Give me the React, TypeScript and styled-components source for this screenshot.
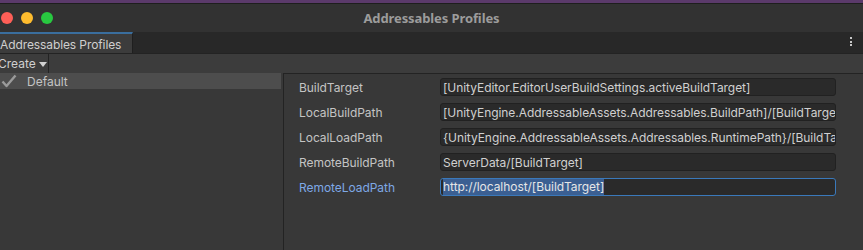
import React from "react";
import styled, { createGlobalStyle } from "styled-components";

const Global = createGlobalStyle`
  html, body { margin: 0; padding: 0; background: #383838; }
  body { font-family: Inter, "Noto Sans", sans-serif; overflow: hidden; }
`;

const Screen = styled.div`
  width: 863px;
  height: 250px;
  display: flex;
  flex-direction: column;
  background: #383838;
  overflow: hidden;
`;

const Desktop = styled.div`
  height: 3px;
  background: #5b3a6b;
  border-bottom: 1px solid #1e1e1e;
  flex: none;
`;

const TitleBar = styled.div`
  height: 28px;
  flex: none;
  position: relative;
  display: flex;
  align-items: center;
  justify-content: center;
  background: #323232;
`;

const Lights = styled.div`
  position: absolute;
  left: 1px;
  top: 0;
  bottom: 0;
  display: flex;
  align-items: center;
  gap: 8px;
`;

const Light = styled.span<{ $c: string }>`
  width: 12px;
  height: 12px;
  border-radius: 50%;
  background: ${(p) => p.$c};
`;

const Title = styled.div`
  font-family: "Noto Sans", Inter, sans-serif;
  font-weight: 700;
  font-size: 13px;
  color: #9c9c9c;
  letter-spacing: -0.1px;
`;

const TabBar = styled.div`
  height: 21px;
  flex: none;
  display: flex;
  align-items: stretch;
  background: #282828;
  position: relative;
`;

const Tab = styled.div`
  width: 133px;
  background: #3c3c3c;
  border-top: 2px solid #3a6e9e;
  border-right: 1px solid #1f1f1f;
  box-sizing: border-box;
  display: flex;
  align-items: center;
  font-size: 12px;
  color: #cfcfcf;
  padding-top: 1px;
  white-space: nowrap;
  letter-spacing: -0.1px;
`;

const Kebab = styled.div`
  position: absolute;
  right: 11px;
  top: 5px;
  display: flex;
  flex-direction: column;
  gap: 1.5px;
  span {
    width: 2px;
    height: 2px;
    background: #c8c8c8;
  }
`;

const Toolbar = styled.div`
  height: 20px;
  flex: none;
  display: flex;
  align-items: stretch;
  background: #3c3c3c;
  border-top: 1px solid #232323;
  box-sizing: border-box;
`;

const ToolButton = styled.div`
  width: 50px;
  border-right: 1px solid #232323;
  display: flex;
  align-items: center;
  gap: 3px;
  margin-left: -2px;
  font-size: 12px;
  color: #cfcfcf;
  svg { margin-top: 1px; }
`;

const Body = styled.div`
  flex: 1;
  display: flex;
  align-items: stretch;
`;

const Sidebar = styled.div`
  width: 283px;
  flex: none;
  display: flex;
  flex-direction: column;
`;

const ProfileRow = styled.div<{ $selected?: boolean }>`
  width: 281px;
  height: 16px;
  display: flex;
  align-items: center;
  background: ${(p) => (p.$selected ? "#4d4d4d" : "transparent")};
  font-size: 12px;
  color: #c4c4c4;
  gap: 10px;
  svg { margin-left: 1px; }
`;

const Panel = styled.div`
  flex: 1;
  border-left: 1px solid #232323;
  border-top: 1px solid #232323;
  padding: 4px 27px 0 15px;
  display: flex;
  flex-direction: column;
  gap: 7px;
`;

const FieldRow = styled.div`
  display: grid;
  grid-template-columns: 141px 1fr;
  align-items: center;
  height: 18px;
`;

const Label = styled.div<{ $active?: boolean }>`
  font-size: 12px;
  color: ${(p) => (p.$active ? "#7ea8e6" : "#c4c4c4")};
  letter-spacing: -0.05px;
`;

const Field = styled.div<{ $active?: boolean }>`
  height: 18px;
  box-sizing: border-box;
  border-radius: 3px;
  background: #2a2a2a;
  border: 1px solid ${(p) => (p.$active ? "#3a79bb" : "#212121")};
  display: flex;
  align-items: center;
  padding: 0 2px;
  font-size: 12px;
  color: #d0d0d0;
  white-space: nowrap;
  overflow: hidden;
  letter-spacing: -0.05px;
`;

const Selection = styled.span`
  background: #3b5f92;
  color: #e6e6e6;
  line-height: 16px;
`;

const fields = [
  { label: "BuildTarget", value: "[UnityEditor.EditorUserBuildSettings.activeBuildTarget]" },
  { label: "LocalBuildPath", value: "[UnityEngine.AddressableAssets.Addressables.BuildPath]/[BuildTarget]" },
  { label: "LocalLoadPath", value: "{UnityEngine.AddressableAssets.Addressables.RuntimePath}/[BuildTarget]" },
  { label: "RemoteBuildPath", value: "ServerData/[BuildTarget]" },
];

export default function App() {
  return (
    <Screen>
      <Global />
      <Desktop />
      <TitleBar>
        <Lights>
          <Light $c="#fe5f57" />
          <Light $c="#febc2e" />
          <Light $c="#28c840" />
        </Lights>
        <Title>Addressables Profiles</Title>
      </TitleBar>
      <TabBar>
        <Tab>Addressables Profiles</Tab>
        <Kebab>
          <span />
          <span />
          <span />
        </Kebab>
      </TabBar>
      <Toolbar>
        <ToolButton>
          Create
          <svg width="8" height="5" viewBox="0 0 8 5">
            <path d="M0 0h8L4 5z" fill="#d2d2d2" />
          </svg>
        </ToolButton>
      </Toolbar>
      <Body>
        <Sidebar>
          <ProfileRow $selected>
            <svg width="16" height="14" viewBox="0 0 16 14">
              <path d="M1.5 7.5 L5.5 12 L14.5 1.5" stroke="#9a9a9a" strokeWidth="2.4" fill="none" strokeLinejoin="round" />
            </svg>
            Default
          </ProfileRow>
        </Sidebar>
        <Panel>
          {fields.map((f) => (
            <FieldRow key={f.label}>
              <Label>{f.label}</Label>
              <Field>{f.value}</Field>
            </FieldRow>
          ))}
          <FieldRow>
            <Label $active>RemoteLoadPath</Label>
            <Field $active>
              <Selection>http://localhost/[BuildTarget]</Selection>
            </Field>
          </FieldRow>
        </Panel>
      </Body>
    </Screen>
  );
}
